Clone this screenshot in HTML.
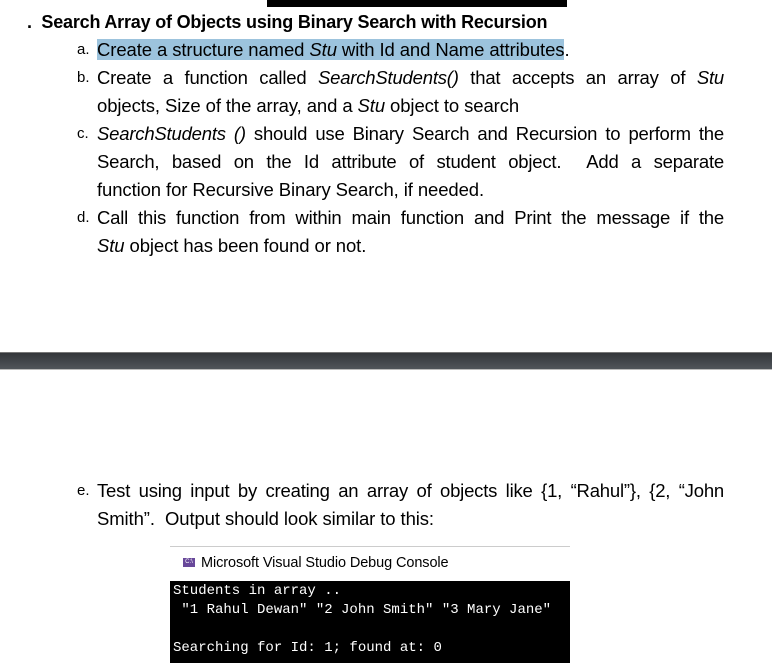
<html><head><style>
body{margin:0;width:772px;height:672px;background:#fff;position:relative;font-family:"Liberation Sans",sans-serif;color:#000;overflow:hidden}
.l{position:absolute;font-size:18.5px;line-height:28px;white-space:nowrap;letter-spacing:-0.1px}
.j{position:absolute;left:97px;width:627px;font-size:18.5px;line-height:28px;text-align:justify;text-align-last:justify;white-space:nowrap;letter-spacing:-0.2px}
.lab{position:absolute;left:77px;font-size:15px;line-height:28px}
.hl{background:#9cc3dd}
.mono{font-family:"Liberation Mono",monospace;font-size:14px;color:#fff;position:absolute;left:173px;white-space:pre}
</style></head><body>
<div style="position:absolute;left:267px;top:0;width:300px;height:7px;background:#000"></div>
<div class="l" style="left:27px;top:8px;font-weight:bold;font-size:18px;letter-spacing:-0.2px">.&nbsp;&nbsp;Search Array of Objects using Binary Search with Recursion</div>
<div class="lab" style="top:36px">a.</div>
<div class="l" style="left:97px;top:36px"><span class="hl">Create a structure named <i>Stu</i> with Id and Name attributes</span>.</div>
<div class="lab" style="top:64px">b.</div>
<div class="j" style="top:64px">Create a function called <i>SearchStudents()</i> that accepts an array of <i>Stu</i></div>
<div class="l" style="left:97px;top:92px">objects, Size of the array, and a <i>Stu</i> object to search</div>
<div class="lab" style="top:120px">c.</div>
<div class="j" style="top:120px"><i>SearchStudents ()</i> should use Binary Search and Recursion to perform the</div>
<div class="j" style="top:148px">Search, based on the Id attribute of student object. &nbsp;Add a separate</div>
<div class="l" style="left:97px;top:176px">function for Recursive Binary Search, if needed.</div>
<div class="lab" style="top:204px">d.</div>
<div class="j" style="top:204px">Call this function from within main function and Print the message if the</div>
<div class="l" style="left:97px;top:232px"><i>Stu</i> object has been found or not.</div>
<div style="position:absolute;left:0;top:352px;width:772px;height:16px;background:linear-gradient(#33363a,#50555a);border-top:1px solid #777;border-bottom:1px solid #bbb"></div>
<div class="lab" style="top:477px">e.</div>
<div class="j" style="top:477px">Test using input by creating an array of objects like {1, “Rahul”}, {2, “John</div>
<div class="l" style="left:97px;top:505px">Smith”. &nbsp;Output should look similar to this:</div>
<div style="position:absolute;left:170px;top:546px;width:400px;height:35px;background:#fff;border-top:1px solid #ccc"></div>
<div style="position:absolute;left:183px;top:558px;width:12px;height:9px;background:#68489a;font-size:6px;color:#fff;line-height:9px;text-align:center">C:\</div>
<div class="l" style="left:201px;top:552px;font-size:14.5px;line-height:22px">Microsoft Visual Studio Debug Console</div>
<div style="position:absolute;left:170px;top:581px;width:400px;height:82px;background:#000"></div>
<div class="mono" style="top:582px;line-height:19px">Students in array ..
 "1 Rahul Dewan" "2 John Smith" "3 Mary Jane"

Searching for Id: 1; found at: 0</div>
</body></html>
